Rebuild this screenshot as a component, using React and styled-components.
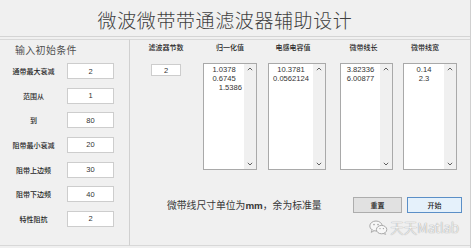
import React from "react";
import styled, { createGlobalStyle } from "styled-components";

const Global = createGlobalStyle`
  html, body { margin: 0; padding: 0; background: #ffffff; }
  body { font-family: "Noto Sans CJK SC", "Liberation Sans", sans-serif; }
  * { box-sizing: border-box; }
`;

const Frame = styled.div`
  width: 471px;
  height: 248px;
  background: #f0f0f0;
  border-right: 1px solid #cfcfcf;
  display: flex;
  flex-direction: column;
  overflow: hidden;
`;

const TitleBar = styled.div`
  height: 37px;
  border-bottom: 1px solid #d4d4d4;
  display: flex;
  align-items: center;
  justify-content: center;
  padding-top: 3px;
  padding-right: 20px;
  font-family: "Noto Sans CJK SC", sans-serif;
  font-weight: 300;
  font-size: 19px;
  letter-spacing: 0.6px;
  color: #404040;
`;

const Main = styled.div`
  flex: 1;
  display: flex;
  padding-top: 2px;
`;

const LeftPanel = styled.div`
  width: 130px;
  border-top: 1px solid #d8d8d8;
  border-right: 1px solid #d0d0d0;
  border-bottom: 1px solid #d8d8d8;
  margin-bottom: 2px;
  padding-top: 3px;
`;

const PanelHeading = styled.div`
  padding-left: 15px;
  font-size: 10px;
  line-height: 13px;
  font-weight: 400;
  color: #505050;
  letter-spacing: 0.3px;
`;

const FieldGrid = styled.div`
  margin-top: 7px;
  display: grid;
  grid-template-columns: 67px 47px;
  grid-auto-rows: 16px;
  row-gap: 8.67px;
  align-items: center;
`;

const FieldLabel = styled.div`
  text-align: center;
  font-size: 7px;
  color: #262626;
  font-weight: 500;
  white-space: nowrap;
`;

const FieldInput = styled.div`
  height: 16px;
  background: #ffffff;
  border: 1px solid #cdcdcd;
  display: flex;
  align-items: center;
  justify-content: center;
  font-family: "Liberation Sans", sans-serif;
  font-size: 7.5px;
  color: #333;
`;

const RightPanel = styled.div`
  flex: 1;
  border-top: 1px solid #d8d8d8;
  border-bottom: 1px solid #d8d8d8;
  margin-bottom: 2px;
  padding-top: 3px;
  display: flex;
  flex-direction: column;
`;

const Columns = styled.div`
  display: flex;
  padding-left: 21px;
`;

const Column = styled.div`
  width: ${p => p.$w}px;
  margin-left: ${p => p.$gap || 0}px;
  display: flex;
  flex-direction: column;
`;

const ColHeader = styled.div`
  height: 9px;
  display: flex;
  justify-content: center;
  padding-right: ${p => (p.$nudge || 0) * 2}px;
  font-size: 7px;
  line-height: 9px;
  color: #262626;
  font-weight: 500;
  white-space: nowrap;
  margin-bottom: 11px;
`;

const OrderInput = styled.div`
  margin-top: 1px;
  height: 12px;
  background: #fff;
  border: 1px solid #cdcdcd;
  display: flex;
  align-items: center;
  justify-content: center;
  font-family: "Liberation Sans", sans-serif;
  font-size: 7.5px;
  color: #333;
`;

const ListBox = styled.div`
  height: 107px;
  background: #fff;
  border: 1px solid #a9a9a9;
  display: flex;
`;

const ListItems = styled.div`
  flex: 1;
  padding-top: 1px;
  display: flex;
  flex-direction: column;
  align-items: center;
  font-family: "Liberation Sans", sans-serif;
  font-size: 7.6px;
  line-height: 9px;
  color: #333;
`;

const Item = styled.div`
  white-space: pre;
`;

const ScrollTrack = styled.div`
  width: 12px;
  background: #f0f0f0;
  display: flex;
  flex-direction: column;
  justify-content: space-between;
  align-items: center;
  padding: 3px 0 3px;
`;

const Arrow = ({ down }) => (
  <svg width="6" height="4" viewBox="0 0 6 4">
    <path
      d={down ? "M0.8 0.8 L3 3 L5.2 0.8" : "M0.8 3.2 L3 1 L5.2 3.2"}
      fill="none"
      stroke="#606060"
      strokeWidth="1"
    />
  </svg>
);

const BottomRow = styled.div`
  margin-top: 27px;
  display: flex;
  align-items: center;
  padding-left: 37px;
  padding-right: 8px;
`;

const Note = styled.div`
  font-size: 9.8px;
  font-weight: 400;
  color: #383838;
  white-space: nowrap;
`;

const Mm = styled.span`
  font-family: "Liberation Sans", sans-serif;
  font-weight: 700;
  font-size: 9.8px;
`;

const Buttons = styled.div`
  margin-left: auto;
  display: flex;
  gap: 5px;
`;

const Button = styled.div`
  width: ${p => p.$w}px;
  height: 16px;
  background: ${p => (p.$primary ? "#e5f1fb" : "#e1e1e1")};
  border: 1px solid ${p => (p.$primary ? "#5b8fc7" : "#adadad")};
  display: flex;
  align-items: center;
  justify-content: center;
  font-size: 7px;
  font-weight: 500;
  color: #222;
`;

const Watermark = styled.div`
  margin-top: 6px;
  align-self: flex-end;
  margin-right: 11px;
  display: flex;
  align-items: center;
  gap: 2px;
  color: #f7f7f7;
  font-size: 13.5px;
  line-height: 16px;
  font-weight: 300;
  text-shadow: 0 0 1px #9a9a9a, 0 0 1px #aaaaaa;
`;

const WeChatIcon = () => (
  <svg width="19" height="15" viewBox="0 0 19 15">
    <ellipse cx="7" cy="6" rx="6.2" ry="5" fill="#f7f7f7" stroke="#a0a0a0" strokeWidth="0.9" />
    <path d="M3 10 L2.2 12.4 L5 10.8" fill="#f7f7f7" stroke="#a0a0a0" strokeWidth="0.8" />
    <circle cx="5" cy="4.6" r="0.8" fill="#a0a0a0" />
    <circle cx="9" cy="4.6" r="0.8" fill="#a0a0a0" />
    <ellipse cx="12.6" cy="9.6" rx="5.2" ry="4.2" fill="#f7f7f7" stroke="#a0a0a0" strokeWidth="0.9" />
    <path d="M15.6 12.8 L16.6 14.4 L14 13.4" fill="#f7f7f7" stroke="#a0a0a0" strokeWidth="0.8" />
    <circle cx="11" cy="8.6" r="0.7" fill="#a0a0a0" />
    <circle cx="14.4" cy="8.6" r="0.7" fill="#a0a0a0" />
  </svg>
);

const fields = [
  ["通带最大衰减", "2"],
  ["范围从", "1"],
  ["到", "80"],
  ["阻带最小衰减", "20"],
  ["阻带上边频", "30"],
  ["阻带下边频", "40"],
  ["特性阻抗", "2"],
];

const lists = [
  { title: "归一化值", w: 54, gap: 22, nudge: 0, items: ["1.0378", "0.6745", "      1.5386"] },
  { title: "电感电容值", w: 58, gap: 11, nudge: 4, items: ["10.3781", "0.0562124"] },
  { title: "微带线长", w: 53, gap: 14, nudge: 3, items: ["3.82336", "6.00877"] },
  { title: "微带线宽", w: 54, gap: 10, nudge: 5, items: ["0.14", "2.3"] },
];

export default function App() {
  return (
    <>
      <Global />
      <Frame>
        <TitleBar>微波微带带通滤波器辅助设计</TitleBar>
        <Main>
          <LeftPanel>
            <PanelHeading>输入初始条件</PanelHeading>
            <FieldGrid>
              {fields.map(([label, value]) => (
                <React.Fragment key={label}>
                  <FieldLabel>{label}</FieldLabel>
                  <FieldInput>{value}</FieldInput>
                </React.Fragment>
              ))}
            </FieldGrid>
          </LeftPanel>
          <RightPanel>
            <Columns>
              <Column $w={30}>
                <ColHeader $nudge={-1}>滤波器节数</ColHeader>
                <OrderInput>2</OrderInput>
              </Column>
              {lists.map(l => (
                <Column key={l.title} $w={l.w} $gap={l.gap}>
                  <ColHeader $nudge={l.nudge}>{l.title}</ColHeader>
                  <ListBox>
                    <ListItems>
                      {l.items.map((it, i) => (
                        <Item key={i}>{it}</Item>
                      ))}
                    </ListItems>
                    <ScrollTrack>
                      <Arrow />
                      <Arrow down />
                    </ScrollTrack>
                  </ListBox>
                </Column>
              ))}
            </Columns>
            <BottomRow>
              <Note>
                微带线尺寸单位为<Mm>mm</Mm>，余为标准量
              </Note>
              <Buttons>
                <Button $w={49}>重置</Button>
                <Button $w={55} $primary>开始</Button>
              </Buttons>
            </BottomRow>
            <Watermark>
              <WeChatIcon />
              <span>天天Matlab</span>
            </Watermark>
          </RightPanel>
        </Main>
      </Frame>
    </>
  );
}
